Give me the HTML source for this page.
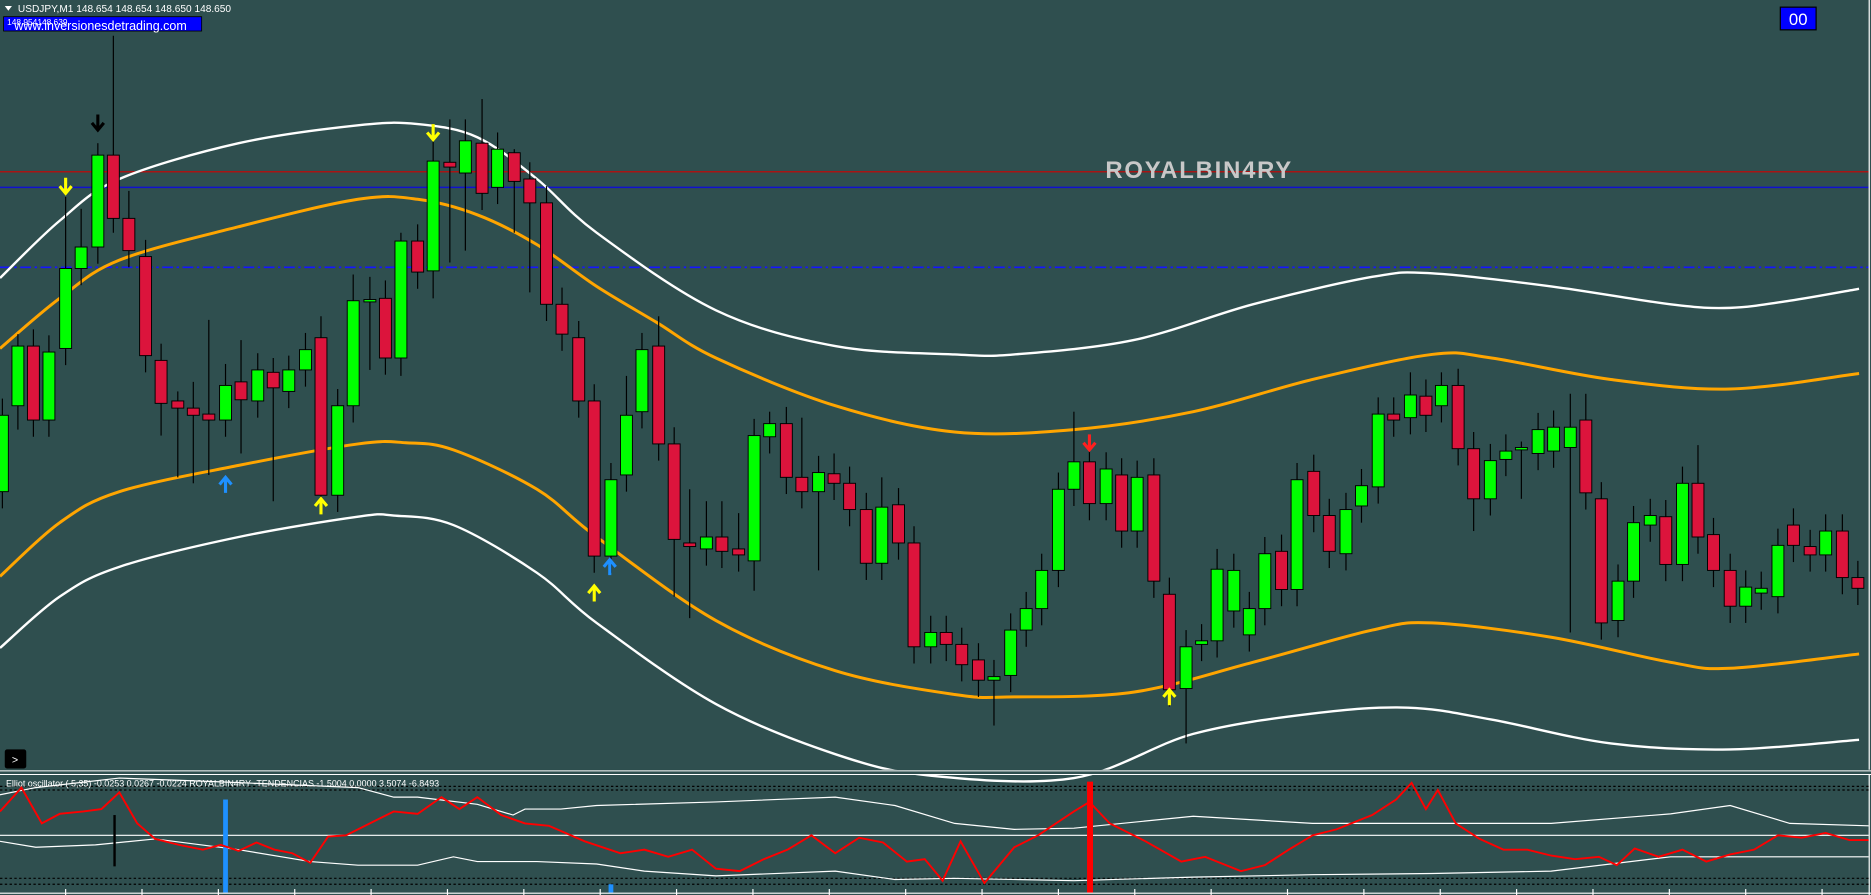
<!DOCTYPE html>
<html><head><meta charset="utf-8">
<style>
html,body{margin:0;padding:0;background:#2f4f4f;overflow:hidden}
svg{display:block}
</style></head>
<body>
<svg id="s" width="1871" height="895" viewBox="0 0 1568 750" preserveAspectRatio="none" xmlns="http://www.w3.org/2000/svg" font-family="Liberation Sans, sans-serif">
<rect width="1568" height="750" fill="#2f4f4f"/>
<line x1="0" y1="144" x2="1566" y2="144" stroke="#d00000" stroke-width="1"/>
<line x1="0" y1="157" x2="1566" y2="157" stroke="#1010d0" stroke-width="1.2"/>
<line x1="0" y1="224" x2="1566" y2="224" stroke="#1515ff" stroke-width="1.3" stroke-dasharray="9,3,2,3"/>
<g id="bands" fill="none" stroke-linejoin="round"></g>
<g id="candles"></g>
<text x="1005" y="149" font-size="20" font-weight="bold" fill="#c8c8c8" text-anchor="middle" letter-spacing="1.5">ROYALBIN4RY</text>
<g id="arrows"></g>
<path d="M4 5 L10 5 L7 9 Z" fill="#fff"/>
<text x="15" y="10" font-size="8.5" fill="#fff">USDJPY,M1  148.654 148.654 148.650 148.650</text>
<rect x="3" y="14" width="166" height="12" fill="#0000ff" stroke="#000" stroke-width="0.7"/>
<text x="6" y="21" font-size="7" fill="#fff">148.954148.639</text>
<text x="12" y="25" font-size="10.5" fill="#fff">www.inversionesdetrading.com</text>
<rect x="1492" y="6" width="30" height="19" fill="#0000ff" stroke="#000"/>
<text x="1507" y="21" font-size="14" fill="#fff" text-anchor="middle">00</text>
<rect x="4" y="628" width="18" height="16" rx="2" fill="#000"/>
<text x="10" y="640" font-size="9" fill="#fff">&gt;</text>
<line x1="1566.5" y1="0" x2="1566.5" y2="750" stroke="#fff" stroke-width="1"/>
<rect x="0" y="645" width="1568" height="4" fill="#2f4f4f"/>
<line x1="0" y1="646" x2="1568" y2="646" stroke="#fff" stroke-width="0.8"/>
<line x1="0" y1="649" x2="1568" y2="649" stroke="#fff" stroke-width="0.8"/>
<g id="osc" fill="none"></g>
<text x="5" y="659" font-size="7.5" fill="#fff">Elliot oscillator ( 5,35) -0.0253 0.0267 -0.0224  ROYALBIN4RY -TENDENCIAS -1.5004 0.0000 3.5074 -6.8493</text>
<line x1="0" y1="748.5" x2="1568" y2="748.5" stroke="#fff" stroke-width="1"/>
</svg>
<script>
var NS="http://www.w3.org/2000/svg";
function el(p,t,a){var e=document.createElementNS(NS,t);for(var k in a)e.setAttribute(k,a[k]);document.getElementById(p).appendChild(e);return e;}
function poly(p,pts,c,w,d){var s=pts.map(function(q){return q[0]+","+q[1]}).join(" ");var a={points:s,stroke:c,"stroke-width":w,fill:"none"};if(d)a["stroke-dasharray"]=d;el(p,"polyline",a);}
function smooth(p,pts,c,w){var d="M"+pts[0][0]+","+pts[0][1];for(var i=0;i<pts.length-1;i++){var p0=pts[i-1]||pts[i],p1=pts[i],p2=pts[i+1],p3=pts[i+2]||p2;
d+=" C"+(p1[0]+(p2[0]-p0[0])/6)+","+(p1[1]+(p2[1]-p0[1])/6)+" "+(p2[0]-(p3[0]-p1[0])/6)+","+(p2[1]-(p3[1]-p1[1])/6)+" "+p2[0]+","+p2[1];}
el(p,"path",{d:d,stroke:c,"stroke-width":w,fill:"none"});}
smooth("bands",[[0,233],[50,185],[100,150],[200,120],[300,105],[350,104],[400,115],[450,150],[500,195],[600,260],[700,290],[800,297],[850,297],[950,285],[1050,255],[1150,232],[1200,229],[1300,240],[1400,255],[1450,258],[1500,252],[1558,242]],"#fff",2);
smooth("bands",[[0,292],[50,250],[100,218],[200,190],[300,167],[350,167],[400,180],[450,205],[500,240],[550,270],[600,300],[700,340],[800,362],[900,360],[1000,345],[1100,318],[1200,297],[1250,300],[1350,318],[1450,326],[1558,313]],"#ffa500",2.5);
smooth("bands",[[0,483],[50,438],[100,412],[200,390],[300,372],[340,371],[380,377],[450,410],[500,450],[600,520],[700,562],[800,582],[850,584],[950,580],[1050,555],[1150,528],[1200,522],[1300,534],[1400,555],[1450,560],[1558,548]],"#ffa500",2.5);
smooth("bands",[[0,543],[50,500],[100,475],[200,450],[300,433],[330,432],[380,440],[450,480],[500,522],[600,590],[700,632],[780,650],[900,652],[1000,615],[1100,598],[1180,593],[1250,603],[1350,623],[1450,628],[1558,620]],"#fff",2);
var C=[[2,348,412,'G'],[15,290,340,'G',280,360],[28,290,352,'R'],[41,295,352,'G'],[55,225,292,'G',165],[68,207,225,'G',175],[82,130,207,'G',120],[95,130,183,'R',30,195],[108,183,210,'R',160],[122,215,298,'R'],[135,302,338,'R',null,365],[149,336,342,'R',328,400],[162,342,348,'R',320,405],[175,347,352,'R',268,398],[189,323,352,'G',305],[202,320,335,'R',285,380],[216,310,336,'G'],[229,312,325,'R',300,420],[242,310,328,'G',298],[256,293,310,'G'],[269,283,415,'R',265],[283,340,415,'G'],[296,252,340,'G',230],[310,251,253,'G',232,310],[323,250,300,'R',235],[336,202,300,'G',195,315],[350,202,228,'R'],[363,135,227,'G',115,250],[377,136,140,'R',100,220],[390,118,145,'G',100,210],[404,120,162,'R',83],[417,125,157,'G'],[431,128,152,'R',125,195],[444,150,170,'R',null,245],[458,170,255,'R'],[471,255,280,'R'],[485,283,336,'R'],[498,336,466,'R'],[512,402,466,'G'],[525,348,398,'G',315],[538,293,345,'G'],[552,290,372,'R',265],[565,372,452,'R',null,500],[578,455,458,'R',410,518],[592,450,460,'G',420],[605,450,462,'R',420],[619,460,465,'R',430],[632,365,470,'G',null,495],[645,355,366,'G',345],[659,355,400,'R'],[672,400,412,'R',350],[686,396,412,'G',null,478],[699,397,405,'R',380],[712,405,427,'R'],[726,427,472,'R'],[739,425,472,'G',400],[753,423,455,'R'],[766,455,542,'R'],[780,530,542,'G'],[793,530,540,'R'],[806,540,557,'R'],[820,553,570,'R'],[833,567,570,'G',null,608],[847,528,566,'G'],[860,510,528,'G'],[873,478,510,'G'],[887,410,478,'G'],[900,387,410,'G',345],[913,387,422,'R'],[927,393,422,'G'],[940,398,445,'R'],[953,400,445,'G'],[967,398,487,'R'],[980,498,578,'R'],[994,542,577,'G',null,623],[1007,537,540,'G'],[1020,477,537,'G',460],[1034,478,512,'G'],[1047,510,532,'G'],[1060,464,510,'G'],[1074,462,494,'R'],[1087,402,494,'G'],[1101,395,432,'R'],[1114,432,462,'R'],[1128,427,464,'G'],[1141,407,424,'G'],[1155,347,408,'G'],[1168,347,352,'R'],[1182,331,350,'G',312],[1195,332,348,'R'],[1208,323,340,'G',312],[1222,323,376,'R'],[1235,376,418,'R',null,445],[1249,386,418,'G'],[1262,378,385,'G'],[1275,375,377,'G',370,418],[1289,360,380,'G'],[1302,358,378,'G'],[1316,358,375,'G',330,530],[1329,352,413,'R',330],[1342,418,522,'R'],[1356,487,520,'G'],[1369,438,487,'G'],[1383,432,440,'G'],[1396,433,473,'R'],[1410,405,473,'G'],[1423,405,450,'R',373],[1436,448,478,'R'],[1450,478,508,'R'],[1463,492,508,'G'],[1476,493,497,'G'],[1490,457,500,'G'],[1503,440,457,'R'],[1517,458,465,'R'],[1530,445,465,'G'],[1544,445,484,'R'],[1557,484,493,'R']];
C.forEach(function(c){var x=c[0],t=c[1],b=c[2],col=c[3]=='G'?'#00ff00':'#dc143c';var hi=c[4]!=null?c[4]:t-14,lo=c[5]!=null?c[5]:b+14;
el("candles","line",{x1:x,y1:hi,x2:x,y2:lo,stroke:"#000","stroke-width":1});
el("candles","rect",{x:x-5,y:t,width:10,height:Math.max(b-t,2),fill:col,stroke:"#000","stroke-width":0.8});});
function arrow(x,y,col,dn){var d=dn?"M"+(x-5)+","+(y-2)+" L"+x+","+(y+4)+" L"+(x+5)+","+(y-2)+" M"+x+","+(y-9)+" L"+x+","+(y+4):"M"+(x-5)+","+(y+2)+" L"+x+","+(y-4)+" L"+(x+5)+","+(y+2)+" M"+x+","+(y+9)+" L"+x+","+(y-4);el("arrows","path",{d:d,stroke:col,"stroke-width":2.6,fill:"none"});}
arrow(55,158,"#ffff00",1);arrow(363,113,"#ffff00",1);arrow(82,105,"#000",1);arrow(913,373,"#ff2020",1);
arrow(269,422,"#ffff00",0);arrow(498,495,"#ffff00",0);arrow(980,582,"#ffff00",0);arrow(189,404,"#1e90ff",0);arrow(511,473,"#1e90ff",0);
[659,662,736,741].forEach(function(y){el("osc","line",{x1:0,y1:y,x2:1566,y2:y,stroke:"#000","stroke-width":1,"stroke-dasharray":"2,2"});});
el("osc","line",{x1:0,y1:700,x2:1566,y2:700,stroke:"#fff","stroke-width":1});
poly("osc",[[0,666],[30,660],[100,652],[180,655],[300,660],[330,668],[350,668],[400,674],[430,683],[440,678],[470,678],[500,675],[600,672],[700,668],[750,675],[800,690],[850,695],[900,694],[1000,684],[1100,690],[1200,690],[1300,690],[1400,682],[1450,675],[1500,690],[1566,692]],"#fff",1);
poly("osc",[[0,705],[30,710],[80,708],[130,703],[200,712],[260,722],[300,725],[350,725],[380,718],[400,722],[450,722],[500,724],[540,730],[600,734],[700,730],[750,737],[800,736],[900,738],[1000,735],[1100,733],[1200,732],[1300,730],[1400,718],[1500,718],[1566,718]],"#fff",1);
el("osc","rect",{x:187,y:670,width:4,height:78,fill:"#1e90ff"});
el("osc","rect",{x:510,y:741,width:4,height:7,fill:"#1e90ff"});
el("osc","rect",{x:911,y:655,width:5,height:93,fill:"#ff0000"});
el("osc","line",{x1:96,y1:683,x2:96,y2:726,stroke:"#000","stroke-width":2});
poly("osc",[[0,680],[18,660],[35,690],[50,682],[70,680],[85,678],[100,664],[115,690],[130,703],[150,708],[170,712],[185,708],[200,713],[215,706],[230,712],[245,715],[260,723],[275,701],[290,700],[310,690],[330,680],[350,682],[370,668],[385,678],[400,668],[420,683],[440,690],[460,692],[490,705],[520,715],[540,712],[560,718],[580,712],[600,728],[620,730],[640,720],[660,712],[680,700],[700,715],[720,702],[740,706],[760,722],[775,720],[790,738],[805,705],[825,740],[850,710],[870,700],[900,680],[913,672],[930,690],[960,705],[990,722],[1010,718],[1040,730],[1060,725],[1080,712],[1100,700],[1120,695],[1150,683],[1170,670],[1183,656],[1195,678],[1205,662],[1220,690],[1240,703],[1260,712],[1280,712],[1300,717],[1320,720],[1340,718],[1355,725],[1370,711],[1390,718],[1410,712],[1430,722],[1450,716],[1470,712],[1490,700],[1510,702],[1530,698],[1550,704],[1566,704]],"#ff0000",1.6);
for(var x=55;x<1566;x+=64){el("osc","line",{x1:x,y1:745,x2:x,y2:750,stroke:"#fff","stroke-width":1});}
</script>
</body></html>
